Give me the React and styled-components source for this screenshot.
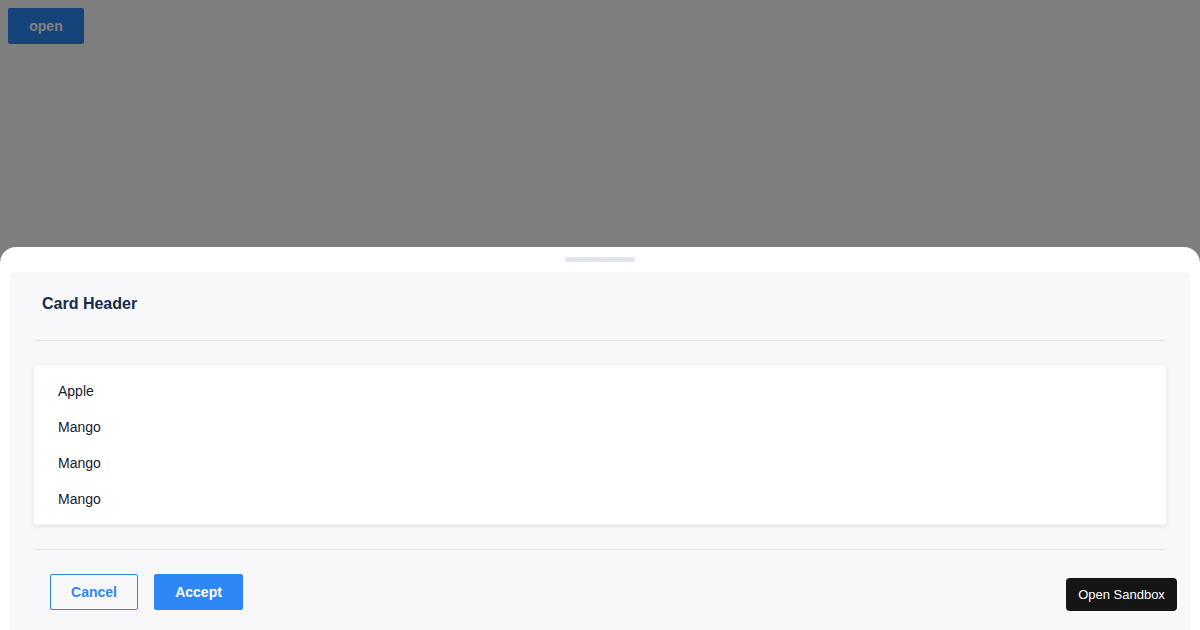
import styled, { createGlobalStyle } from "styled-components";

const GlobalStyle = createGlobalStyle`
  body {
    margin: 0;
    font-family: "Liberation Sans", Arial, sans-serif;
    background: #ffffff;
  }
`;

const Page = styled.div`
  padding: 8px;
`;

const OpenButton = styled.button`
  width: 76px;
  height: 36px;
  border: none;
  border-radius: 2px;
  background: #2d88f5;
  color: #ffffff;
  font-family: inherit;
  font-size: 14px;
  font-weight: 700;
  cursor: pointer;
`;

const Overlay = styled.div`
  position: fixed;
  inset: 0;
  background: rgba(0, 0, 0, 0.5);
`;

const Sheet = styled.div`
  position: fixed;
  left: 0;
  right: 0;
  top: 247px;
  bottom: -20px;
  background: #ffffff;
  border-radius: 16px 16px 0 0;
  padding: 0 10px;
  display: flex;
  flex-direction: column;
`;

const HandleArea = styled.div`
  height: 25px;
  display: flex;
  justify-content: center;
  align-items: center;
`;

const Handle = styled.div`
  width: 70px;
  height: 5px;
  border-radius: 3px;
  background-color: #e6e7ee;
  background-image: repeating-linear-gradient(
    90deg,
    #b9dcf5 0 1px,
    transparent 1px 3px
  );
  background-size: 62px 1px;
  background-position: 4px 2px;
  background-repeat: no-repeat;
`;

const Card = styled.div`
  flex: 1;
  background: #f8f8fa;
  border-radius: 6px;
  padding: 0 24px;
`;

const CardHeader = styled.div`
  height: 64px;
  display: flex;
  align-items: center;
  padding: 0 0 4px 8px;
  border-bottom: 1px solid #e3e3ea;
  font-size: 16px;
  font-weight: 700;
  color: #172b4d;
`;

const CardBody = styled.div`
  padding: 24px 0;
  border-bottom: 1px solid #e3e3ea;
`;

const List = styled.ul`
  list-style: none;
  margin: 0;
  padding: 8px 0;
  background: #ffffff;
  border-radius: 4px;
  box-shadow: 0 1px 4px rgba(0, 0, 0, 0.12);
`;

const Item = styled.li`
  height: 36px;
  display: flex;
  align-items: center;
  padding-left: 24px;
  font-size: 14px;
  color: #172033;
`;

const Footer = styled.div`
  display: flex;
  gap: 16px;
  padding: 24px 16px;
`;

const ActionButton = styled.button`
  height: 36px;
  width: ${(p) => (p.$primary ? "89px" : "88px")};
  border: 1px solid #2d88f5;
  border-radius: 2px;
  background: ${(p) => (p.$primary ? "#2d88f5" : "transparent")};
  color: ${(p) => (p.$primary ? "#ffffff" : "#2d88f5")};
  font-family: inherit;
  font-size: 14px;
  font-weight: 700;
  cursor: pointer;
`;

const SandboxButton = styled.button`
  position: fixed;
  right: 23px;
  bottom: 19px;
  width: 111px;
  height: 33px;
  border: none;
  border-radius: 4px;
  background: #151515;
  color: #ffffff;
  font-family: inherit;
  font-size: 13px;
  cursor: pointer;
`;

const fruits = ["Apple", "Mango", "Mango", "Mango"];

const App = () => {
  return (
    <>
      <GlobalStyle />
      <Page>
        <OpenButton>open</OpenButton>
      </Page>
      <Overlay />
      <Sheet>
        <HandleArea>
          <Handle />
        </HandleArea>
        <Card>
          <CardHeader>Card Header</CardHeader>
          <CardBody>
            <List>
              {fruits.map((fruit, i) => (
                <Item key={i}>{fruit}</Item>
              ))}
            </List>
          </CardBody>
          <Footer>
            <ActionButton>Cancel</ActionButton>
            <ActionButton $primary>Accept</ActionButton>
          </Footer>
        </Card>
      </Sheet>
      <SandboxButton>Open Sandbox</SandboxButton>
    </>
  );
};

export default App;
